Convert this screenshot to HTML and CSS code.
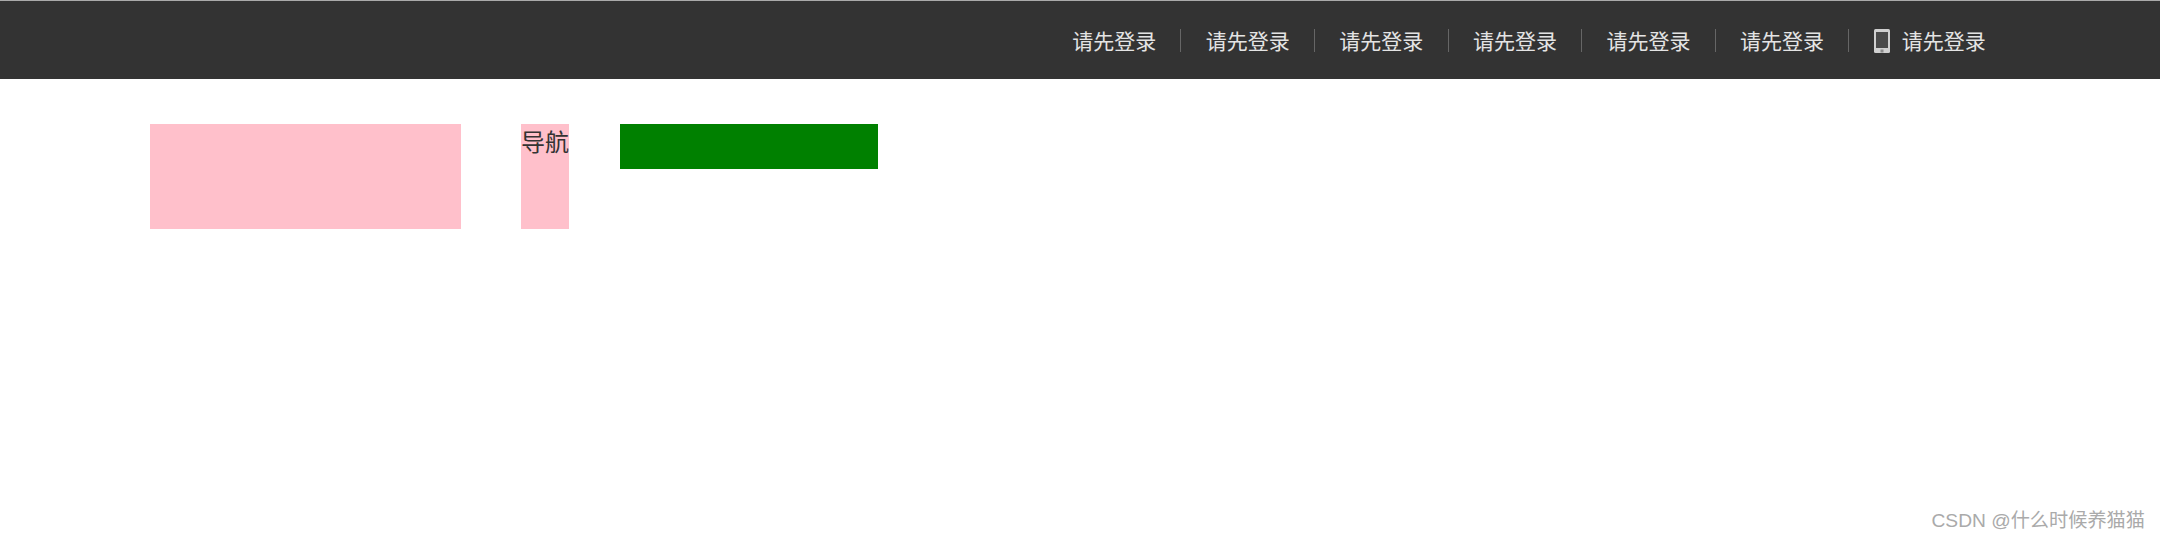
FILE: index.html
```html
<!DOCTYPE html>
<html lang="en">
<head>
  <meta charset="UTF-8" />
  <title>导航</title>
  <link rel="stylesheet" href="styles.css">
</head>
<body>

  <header class="topbar">
    <a href="#" class="top-link">请先登录</a>
    <a href="#" class="top-link">请先登录</a>
    <a href="#" class="top-link">请先登录</a>
    <a href="#" class="top-link">请先登录</a>
    <a href="#" class="top-link">请先登录</a>
    <a href="#" class="top-link">请先登录</a>
    <a href="#" class="top-link top-link-last">
      <svg class="phone-icon" width="16" height="24" viewBox="0 0 16 24">
        <rect x="0" y="0" width="16" height="24" rx="1.5" fill="#d0d0d0" />
        <rect x="2" y="3" width="12" height="16" fill="#4a4a4a" />
        <rect x="6.5" y="20.5" width="3" height="3" fill="#8a8a8a" />
      </svg>
      请先登录
    </a>
  </header>

  <div class="main">
    <div class="logo"></div>
    <nav class="nav">导航</nav>
    <div class="search"></div>
  </div>

  <div class="watermark">CSDN @什么时候养猫猫</div>

</body>
</html>
```

FILE: styles.css
```css
body {
  font-family: "Noto Sans CJK SC", "Liberation Sans", sans-serif;
  background: #fff;
  margin: 0;
  height: 540px;
  overflow: hidden;
}

.topbar {
  display: flex;
  justify-content: flex-end;
  align-items: center;
  height: 78px;
  padding-right: 150px;
  background: #333;
  border-top: 1px solid #aaa;
}

.top-link {
  display: flex;
  align-items: center;
  height: 23px;
  padding: 0 24.3px;
  border-right: 1px solid #666;
  color: #e4e4e4;
  font-size: 21px;
  line-height: 23px;
  text-decoration: none;
}

.top-link-last {
  border-right: none;
}

.phone-icon {
  margin-right: 12px;
  margin-top: 2px;
}

.main {
  display: flex;
  align-items: flex-start;
  padding: 45px 0 0 150px;
}

.logo {
  width: 311px;
  height: 105px;
  background: pink;
}

.nav {
  width: 48px;
  height: 105px;
  margin-left: 60px;
  background: pink;
  color: #333;
  font-size: 24px;
  line-height: 33px;
  white-space: nowrap;
}

.search {
  width: 258px;
  height: 45px;
  margin-left: 51px;
  background: green;
}

.watermark {
  position: absolute;
  right: 15px;
  bottom: 6px;
  color: #aaa;
  font-family: "Liberation Sans", "Noto Sans CJK SC", sans-serif;
  font-size: 19.2px;
  line-height: 26px;
}
```
